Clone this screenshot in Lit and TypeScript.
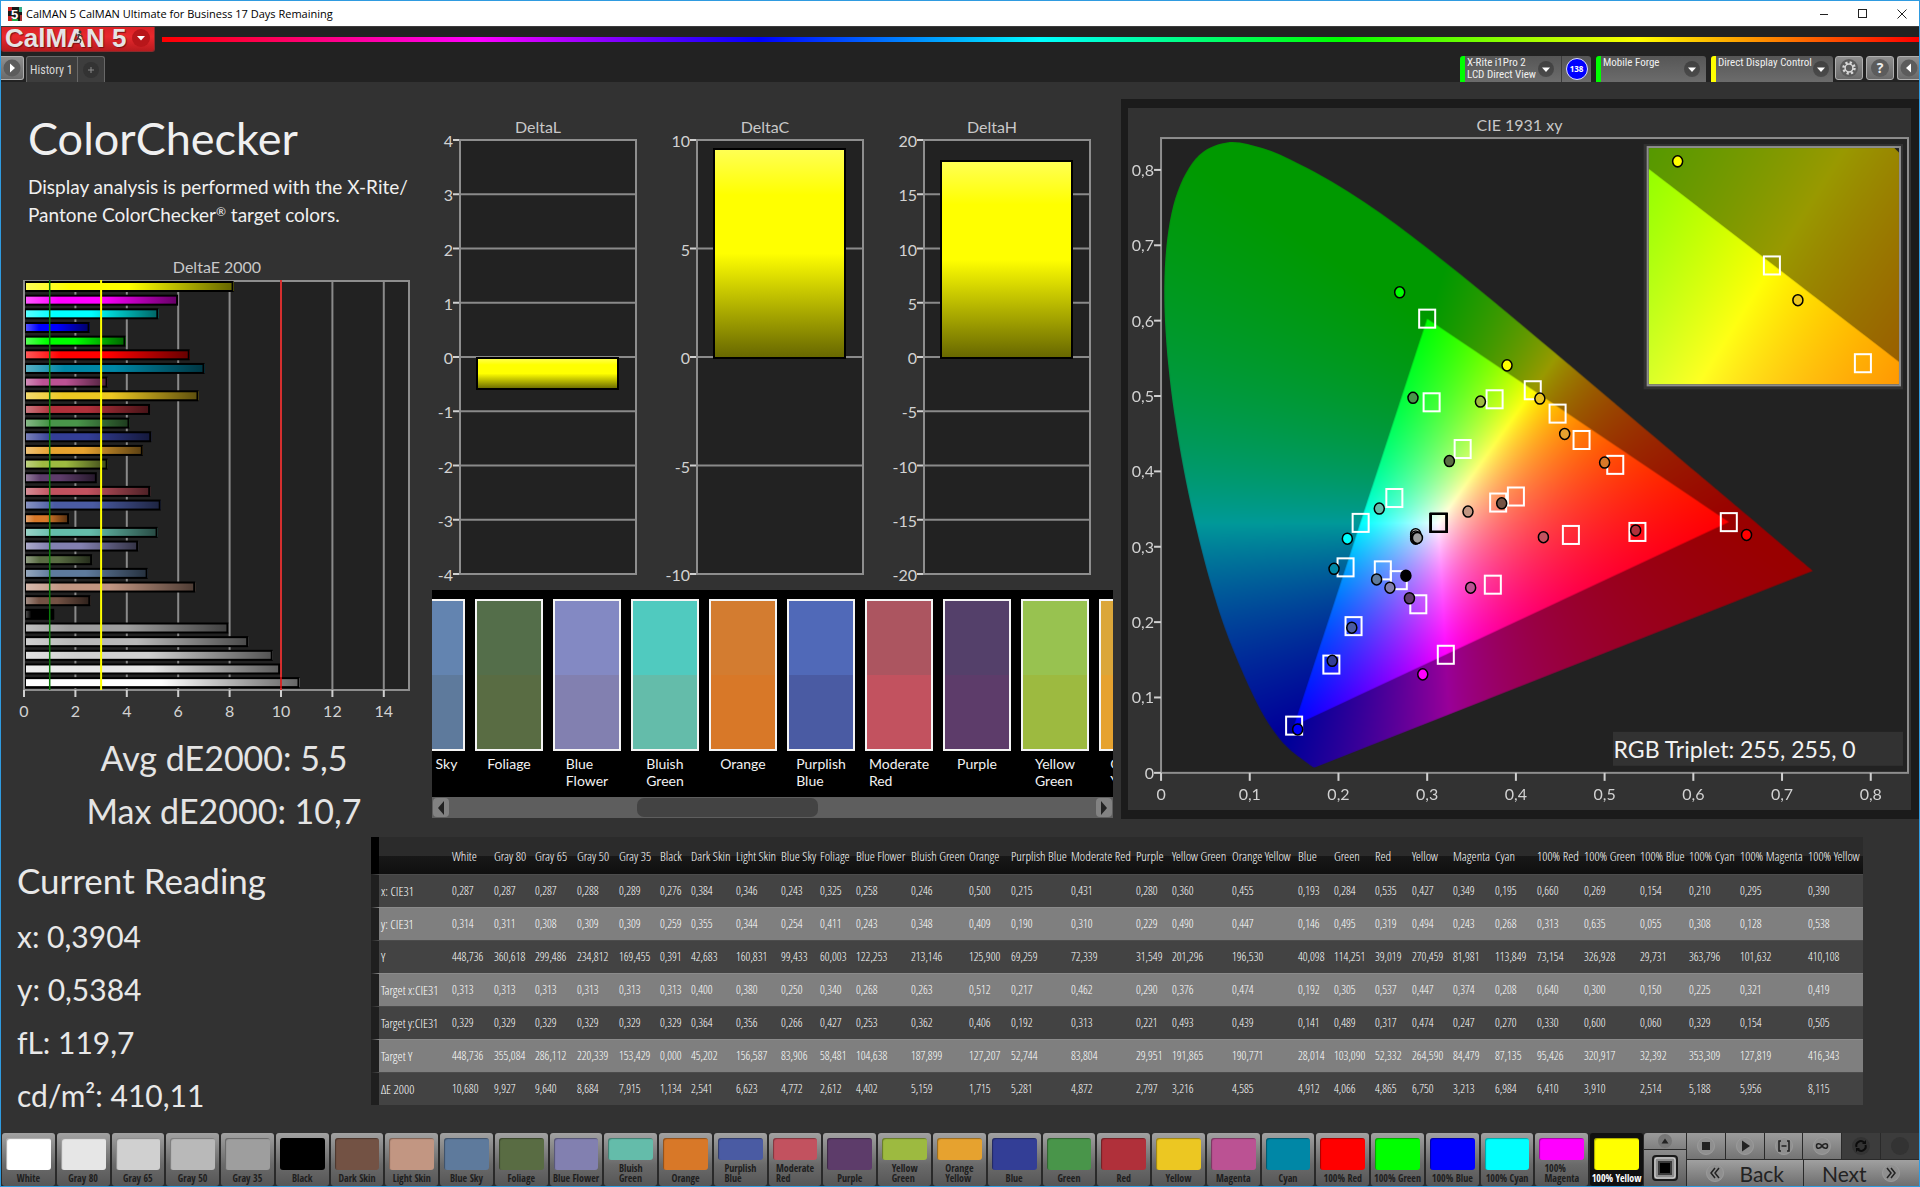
import { LitElement, html, svg, css } from "lit";
import { customElement, property } from "lit/decorators.js";
import { classMap } from "lit/directives/class-map.js";

interface Patch {
  name: string;
  lines?: string[];
  color: string;
  width: number;
  values: string[];
}

const p = (name: string, color: string, width: number, values: string, lines?: string[]): Patch => ({
  name,
  color,
  width,
  values: values.split(" "),
  lines,
});

const PATCHES: Patch[] = [
  p("White", "#ffffff", 42, "0,287 0,314 448,736 0,313 0,329 448,736 10,680"),
  p("Gray 80", "#e6e6e6", 41, "0,287 0,311 360,618 0,313 0,329 355,084 9,927"),
  p("Gray 65", "#d0d0d0", 42, "0,287 0,308 299,486 0,313 0,329 286,112 9,640"),
  p("Gray 50", "#b9b9b9", 42, "0,288 0,309 234,812 0,313 0,329 220,339 8,684"),
  p("Gray 35", "#9e9e9e", 41, "0,289 0,309 169,455 0,313 0,329 153,429 7,915"),
  p("Black", "#000000", 31, "0,276 0,259 0,391 0,313 0,329 0,000 1,134"),
  p("Dark Skin", "#735244", 45, "0,384 0,355 42,683 0,400 0,364 45,202 2,541"),
  p("Light Skin", "#c29682", 45, "0,346 0,344 160,831 0,380 0,356 156,587 6,623"),
  p("Blue Sky", "#5e7a9c", 39, "0,243 0,254 99,433 0,250 0,266 83,906 4,772"),
  p("Foliage", "#596c43", 36, "0,325 0,411 60,003 0,340 0,427 58,481 2,612"),
  p("Blue Flower", "#8280b0", 55, "0,258 0,243 122,253 0,268 0,253 104,638 4,402", ["Blue", "Flower"]),
  p("Bluish Green", "#64bcaa", 58, "0,246 0,348 213,146 0,263 0,362 187,899 5,159", ["Bluish", "Green"]),
  p("Orange", "#d87828", 42, "0,500 0,409 125,900 0,512 0,406 127,207 1,715"),
  p("Purplish Blue", "#4a5ba3", 60, "0,215 0,190 69,259 0,217 0,192 52,744 5,281", ["Purplish", "Blue"]),
  p("Moderate Red", "#c2525f", 65, "0,431 0,310 72,339 0,462 0,313 83,804 4,872", ["Moderate", "Red"]),
  p("Purple", "#5d3c6a", 36, "0,280 0,229 31,549 0,290 0,221 29,951 2,797"),
  p("Yellow Green", "#9dba40", 60, "0,360 0,490 201,296 0,376 0,493 191,865 3,216", ["Yellow", "Green"]),
  p("Orange Yellow", "#e6a22f", 66, "0,455 0,447 196,530 0,474 0,439 190,771 4,585", ["Orange", "Yellow"]),
  p("Blue", "#333e96", 36, "0,193 0,146 40,098 0,192 0,141 28,014 4,912"),
  p("Green", "#49954a", 41, "0,284 0,495 114,251 0,305 0,489 103,090 4,066"),
  p("Red", "#b0303a", 37, "0,535 0,319 39,019 0,537 0,317 52,332 4,865"),
  p("Yellow", "#ecc722", 41, "0,427 0,494 270,459 0,447 0,474 264,590 6,750"),
  p("Magenta", "#bb5293", 42, "0,349 0,243 81,981 0,374 0,247 84,479 3,213"),
  p("Cyan", "#0087a6", 42, "0,195 0,268 113,849 0,208 0,270 87,135 6,984"),
  p("100% Red", "#ff0000", 47, "0,660 0,313 73,154 0,640 0,330 95,426 6,410"),
  p("100% Green", "#00ff00", 56, "0,269 0,635 326,928 0,300 0,600 320,917 3,910"),
  p("100% Blue", "#0000ff", 49, "0,154 0,055 29,731 0,150 0,060 32,392 2,514"),
  p("100% Cyan", "#00ffff", 51, "0,210 0,308 363,796 0,225 0,329 353,309 5,188"),
  p("100% Magenta", "#ff00ff", 68, "0,295 0,128 101,632 0,321 0,154 127,819 5,956", ["100%", "Magenta"]),
  p("100% Yellow", "#ffff00", 57, "0,390 0,538 410,108 0,419 0,505 416,343 8,115"),
];

const ROWS = ["x: CIE31", "y: CIE31", "Y", "Target x:CIE31", "Target y:CIE31", "Target Y", "ΔE 2000"];

const num = (text: string) => Number(text.replace(",", "."));
const label = (value: number) => String(value).replace(".", ",");

const LOCUS: [number, number][] = [
  [0.1741, 0.005], [0.1733, 0.0048], [0.1714, 0.0051], [0.1689, 0.0069], [0.1644, 0.0109], [0.1566, 0.0177],
  [0.151, 0.0227], [0.144, 0.0297], [0.1355, 0.0399], [0.1241, 0.0578], [0.1096, 0.0868], [0.0913, 0.1327],
  [0.0687, 0.2007], [0.0454, 0.295], [0.0235, 0.4127], [0.0082, 0.5384], [0.0039, 0.6548], [0.0139, 0.7502],
  [0.0389, 0.812], [0.0743, 0.8338], [0.1142, 0.8262], [0.1547, 0.8059], [0.1929, 0.7816], [0.2296, 0.7543],
  [0.2658, 0.7243], [0.3016, 0.6923], [0.3373, 0.6589], [0.3731, 0.6245], [0.4087, 0.5896], [0.4441, 0.5547],
  [0.4788, 0.5202], [0.5125, 0.4866], [0.5448, 0.4544], [0.5752, 0.4242], [0.6029, 0.3965], [0.627, 0.3725],
  [0.6658, 0.334], [0.6915, 0.3083], [0.719, 0.2809], [0.7347, 0.2653],
];

interface View {
  width: number;
  height: number;
  originX: number;
  originY: number;
  scaleX: number;
  scaleY: number;
}

/** Paints the chromaticity diagram, dimmed outside the Rec. 709 triangle. */
function paintDiagram(canvas: HTMLCanvasElement, v: View) {
  canvas.width = v.width;
  canvas.height = v.height;
  const ctx = canvas.getContext("2d")!;
  const image = ctx.createImageData(v.width, v.height);
  const X = (x: number) => v.originX + x * v.scaleX;
  const Y = (y: number) => v.originY - y * v.scaleY;
  for (let j = 0; j < v.height; j++) {
    const y = (v.originY - j - 0.5) / v.scaleY;
    for (let i = 0; i < v.width; i++) {
      const x = (i + 0.5 - v.originX) / v.scaleX;
      const z = 1 - x - y;
      const r = Math.max(0, 3.2406 * x - 1.5372 * y - 0.4986 * z);
      const g = Math.max(0, -0.9689 * x + 1.8758 * y + 0.0415 * z);
      const b = Math.max(0, 0.0557 * x - 0.204 * y + 1.057 * z);
      const k = 255 / Math.max(r, g, b, 0.0001);
      const o = (j * v.width + i) * 4;
      image.data[o] = r * k;
      image.data[o + 1] = g * k;
      image.data[o + 2] = b * k;
      image.data[o + 3] = 255;
    }
  }
  ctx.putImageData(image, 0, 0);

  ctx.beginPath();
  ctx.rect(0, 0, v.width, v.height);
  ctx.moveTo(X(0.64), Y(0.33));
  ctx.lineTo(X(0.3), Y(0.6));
  ctx.lineTo(X(0.15), Y(0.06));
  ctx.closePath();
  ctx.fillStyle = "rgba(0,0,0,0.4)";
  ctx.fill("evenodd");

  ctx.globalCompositeOperation = "destination-in";
  ctx.beginPath();
  ctx.moveTo(X(LOCUS[0][0]), Y(LOCUS[0][1]));
  for (let i = 0; i < LOCUS.length - 1; i++) {
    const a = LOCUS[Math.max(0, i - 1)];
    const b = LOCUS[i];
    const c = LOCUS[i + 1];
    const d = LOCUS[Math.min(LOCUS.length - 1, i + 2)];
    ctx.bezierCurveTo(
      X(b[0] + (c[0] - a[0]) / 6), Y(b[1] + (c[1] - a[1]) / 6),
      X(c[0] - (d[0] - b[0]) / 6), Y(c[1] - (d[1] - b[1]) / 6),
      X(c[0]), Y(c[1]),
    );
  }
  ctx.closePath();
  ctx.fillStyle = "#000";
  ctx.fill();
}

const chartStyles = css`
  :host { display: block; }
  svg { display: block; width: 100%; height: auto; }
  text { font-family: "Lato", sans-serif; fill: #d2d2d2; }
  .axis { font-size: 16px; }
  .title { font-size: 16px; fill: #c8c8c8; }
  .plot { fill: #222222; }
  .frame { fill: none; stroke: #8e8e8e; stroke-width: 2; }
  .grid { stroke: #8a8a8a; stroke-width: 2; }
  .tick { stroke: #d0d0d0; stroke-width: 2; }
`;

@customElement("delta-e-chart")
export class DeltaEChart extends LitElement {
  static styles = [chartStyles, css`
    .bar { stroke: #000000; stroke-width: 2; }
  `];

  render() {
    const left = 23;
    const top = 31;
    const bottom = 440;
    const unit = 25.7;
    const bars = [...PATCHES].reverse();
    return html`<svg viewBox="0 0 430 480" role="img" aria-label="DeltaE 2000 per patch">
      <defs>
        <linearGradient id="shade">
          <stop offset="0" stop-color="#fff" stop-opacity="0.35"></stop>
          <stop offset="0.22" stop-color="#fff" stop-opacity="0"></stop>
          <stop offset="0.5" stop-color="#000" stop-opacity="0"></stop>
          <stop offset="1" stop-color="#000" stop-opacity="0.6"></stop>
        </linearGradient>
      </defs>
      <text class="title" x="216" y="23" text-anchor="middle">DeltaE 2000</text>
      <rect class="plot" x=${left} y=${top} width="385" height=${bottom - top}></rect>
      ${[2, 4, 6, 8, 10, 12, 14].map((v) => svg`
        <line class="grid" x1=${left + v * unit} x2=${left + v * unit} y1=${top} y2=${bottom}></line>`)}
      <rect class="frame" x=${left} y=${top} width="385" height=${bottom - top}></rect>
      ${bars.map((b, i) => {
        const w = num(b.values[6]) * unit;
        const y = 32 + i * 13.66;
        return svg`
          <rect x=${left + 1} y=${y} width=${w} height="9" fill=${b.color}></rect>
          <rect class="bar" x=${left + 1} y=${y} width=${w - 1} height="9" fill="url(#shade)"></rect>`;
      })}
      <line x1=${left} x2=${left} y1=${top} y2=${bottom} class="frame"></line>
      <line x1=${left + unit} x2=${left + unit} y1="30" y2=${bottom} stroke="#0a7a0a" stroke-width="1.5"></line>
      <line x1=${left + 3 * unit} x2=${left + 3 * unit} y1="30" y2=${bottom} stroke="#ffff00" stroke-width="2"></line>
      <line x1=${left + 10 * unit} x2=${left + 10 * unit} y1="30" y2=${bottom} stroke="#ee1111" stroke-width="1.5"></line>
      ${[0, 2, 4, 6, 8, 10, 12, 14].map((v) => svg`
        <line class="tick" x1=${left + v * unit} x2=${left + v * unit} y1=${bottom} y2=${bottom + 7}></line>
        <text class="axis" x=${left + v * unit} y="467" text-anchor="middle">${v}</text>`)}
    </svg>`;
  }
}

interface Delta {
  title: string;
  titleX: number;
  x: number;
  width: number;
  ticks: number[];
  barTop: number;
  barHeight: number;
}

@customElement("delta-lch-charts")
export class DeltaLchCharts extends LitElement {
  static styles = [chartStyles, css`
    .bar { stroke: #000000; stroke-width: 2; }
  `];

  private charts: Delta[] = [
    { title: "DeltaL", titleX: 107, x: 29, width: 176, ticks: [4, 3, 2, 1, 0, -1, -2, -3, -4], barTop: 248, barHeight: 31 },
    { title: "DeltaC", titleX: 334, x: 266, width: 166, ticks: [10, 5, 0, -5, -10], barTop: 39, barHeight: 209 },
    { title: "DeltaH", titleX: 561, x: 493, width: 166, ticks: [20, 15, 10, 5, 0, -5, -10, -15, -20], barTop: 51, barHeight: 197 },
  ];

  render() {
    const top = 30;
    const height = 434;
    return html`<svg viewBox="0 0 690 480" role="img" aria-label="DeltaL, DeltaC and DeltaH">
      <defs>
        <linearGradient id="shade" x2="0" y2="1">
          <stop offset="0" stop-color="#ffff55"></stop>
          <stop offset="0.22" stop-color="#ffff00"></stop>
          <stop offset="0.5" stop-color="#ffff00"></stop>
          <stop offset="1" stop-color="#666600"></stop>
        </linearGradient>
      </defs>
      ${this.charts.map((c) => svg`
        <text class="title" x=${c.titleX} y="23" text-anchor="middle">${c.title}</text>
        <rect class="plot" x=${c.x} y=${top} width=${c.width} height=${height}></rect>
        ${c.ticks.map((t, i) => {
          const y = top + (i * height) / (c.ticks.length - 1);
          return svg`
            <line class="grid" x1=${c.x} x2=${c.x + c.width} y1=${y} y2=${y}></line>
            <line class="tick" x1=${c.x - 7} x2=${c.x} y1=${y} y2=${y}></line>
            <text class="axis" x=${c.x - 7} y=${y + 7} text-anchor="end">${t}</text>`;
        })}
        <rect class="frame" x=${c.x} y=${top} width=${c.width} height=${height}></rect>
        <rect class="bar" x=${c.x + 17} y=${c.barTop} width=${c.width - 35} height=${c.barHeight} fill="url(#shade)"></rect>`)}
    </svg>`;
  }
}

@customElement("cie-chart")
export class CieChart extends LitElement {
  static styles = [chartStyles, css`
    canvas { display: block; width: 100%; height: 100%; }
    .target { fill: none; stroke: #ffffff; stroke-width: 2; }
    .white-point { stroke: #000000; }
    .reading { stroke: #000000; stroke-width: 1.5; }
    .plate { fill: #323232; }
    .triplet { font-size: 23px; fill: #f2f2f2; }
    .loupe { fill: none; stroke: #8e8e8e; stroke-width: 2; }
  `];

  private main: View = { width: 744, height: 632, originX: -1, originY: 631, scaleX: 886, scaleY: 752.7 };
  private zoom: View = { width: 250, height: 236, originX: -1237, originY: 1708, scaleX: 3246, scaleY: 3150 };

  firstUpdated() {
    const [main, zoom] = Array.from(this.renderRoot.querySelectorAll("canvas"));
    paintDiagram(main, this.main);
    paintDiagram(zoom, this.zoom);
  }

  private target(v: View, dx: number, dy: number, patch: Patch, neutral: boolean) {
    const x = dx + v.originX + num(patch.values[3]) * v.scaleX;
    const y = dy + v.originY - num(patch.values[4]) * v.scaleY;
    return svg`<rect class=${neutral ? "target white-point" : "target"} x=${x - 8} y=${y - 9} width="16" height="18"></rect>`;
  }

  private reading(v: View, dx: number, dy: number, patch: Patch) {
    const x = dx + v.originX + num(patch.values[0]) * v.scaleX;
    const y = dy + v.originY - num(patch.values[1]) * v.scaleY;
    return svg`<ellipse class="reading" cx=${x} cy=${y} rx="5" ry="5.5" fill=${patch.color}></ellipse>`;
  }

  render() {
    const ticks = [0, 0.1, 0.2, 0.3, 0.4, 0.5, 0.6, 0.7, 0.8];
    const near = PATCHES.filter((q) => ["100% Yellow", "Yellow"].includes(q.name));
    return html`<svg viewBox="0 0 782 701" role="img" aria-label="CIE 1931 xy chromaticity diagram">
      <text class="title" x="391" y="23" text-anchor="middle">CIE 1931 xy</text>
      <rect class="plot" x="33" y="30" width="746" height="634"></rect>
      <foreignObject x="34" y="31" width="744" height="632"><canvas></canvas></foreignObject>
      ${PATCHES.map((q, i) => this.target(this.main, 34, 31, q, i < 6))}
      ${PATCHES.map((q) => this.reading(this.main, 34, 31, q))}
      <rect class="frame" x="33" y="30" width="746" height="634"></rect>
      ${ticks.map((t) => svg`
        <line class="tick" x1=${33 + t * 886} x2=${33 + t * 886} y1="664" y2="672"></line>
        <text class="axis" x=${33 + t * 886} y="691" text-anchor="middle">${label(t)}</text>
        <line class="tick" x1="26" x2="33" y1=${664 - t * 752.7} y2=${664 - t * 752.7}></line>
        <text class="axis" x="26" y=${670 - t * 752.7} text-anchor="end">${label(t)}</text>`)}
      <rect class="plate" x="515" y="36" width="259" height="245"></rect>
      <rect class="plot" x="519" y="39" width="252" height="238"></rect>
      <foreignObject x="520" y="40" width="250" height="236"><canvas></canvas></foreignObject>
      <rect class="loupe" x="519" y="39" width="252" height="238"></rect>
      ${near.map((q) => this.target(this.zoom, 520, 40, q, false))}
      ${near.map((q) => this.reading(this.zoom, 520, 40, q))}
      <rect class="plate" x="484" y="623" width="290" height="34"></rect>
      <text class="triplet" x="485" y="649">RGB Triplet: 255, 255, 0</text>
    </svg>`;
  }
}

interface StripItem { lines: string[]; actual: string; target: string; }

@customElement("swatch-strip")
export class SwatchStrip extends LitElement {
  static styles = css`
    :host { display: block; }
    .view { overflow: hidden; background: #000000; padding: 9px 0 8px; }
    .track { display: flex; gap: 10px; margin: 0 0 0 -35px; padding: 0; list-style: none; }
    .item { flex: 0 0 68px; display: flex; flex-direction: column; align-items: center; }
    .chip { align-self: stretch; height: 148px; border: 2px solid #f4f4f4; display: flex; flex-direction: column; }
    .half { flex: 1; }
    .name { margin-top: 4px; height: 34px; font: 14px/17px "Lato", sans-serif; color: #f2f2f2; white-space: pre; }
    .scroll { display: flex; height: 21px; box-sizing: border-box; padding: 1px; background: #5e5e5e; }
    .arrow { flex: 0 0 16px; padding: 0; border: 0; border-radius: 4px; background: #828282; display: grid; place-items: center; }
    .rail { flex: 1; display: flex; }
    .thumb { width: 28%; margin-left: 29%; border-radius: 7px; background: #434343; }
  `;

  private items: StripItem[] = [
    { lines: ["Blue Sky"], actual: "#6384b0", target: "#5e7a9c" },
    { lines: ["Foliage"], actual: "#546e4a", target: "#596c43" },
    { lines: ["Blue", "Flower"], actual: "#8389c3", target: "#8280b0" },
    { lines: ["Bluish", "Green"], actual: "#50cabf", target: "#64bcaa" },
    { lines: ["Orange"], actual: "#d37c30", target: "#d87828" },
    { lines: ["Purplish", "Blue"], actual: "#5069b8", target: "#4a5ba3" },
    { lines: ["Moderate", "Red"], actual: "#ac5560", target: "#c2525f" },
    { lines: ["Purple"], actual: "#54406a", target: "#5d3c6a" },
    { lines: ["Yellow", "Green"], actual: "#98c250", target: "#9dba40" },
    { lines: ["Orange", "Yellow"], actual: "#dba63a", target: "#e6a22f" },
  ];

  render() {
    return html`
      <div class="view"><ul class="track">
        ${this.items.map((s) => html`<li class="item">
          <div class="chip">
            <div class="half" style="background:${s.actual}"></div>
            <div class="half" style="background:${s.target}"></div>
          </div>
          <div class="name">${s.lines.join("\n")}</div>
        </li>`)}
      </ul></div>
      <div class="scroll">
        <button class="arrow" aria-label="Scroll left"><svg width="8" height="14"><path d="M7 0v14L1 7z" fill="#222"></path></svg></button>
        <div class="rail"><div class="thumb"></div></div>
        <button class="arrow" aria-label="Scroll right"><svg width="8" height="14"><path d="M1 0v14l6-7z" fill="#222"></path></svg></button>
      </div>`;
  }
}

@customElement("reading-table")
export class ReadingTable extends LitElement {
  static styles = css`
    :host { display: block; }
    table { width: 100%; table-layout: fixed; border-collapse: separate; border-spacing: 0; font: 12px/16px "Open Sans Condensed Light", "Roboto Condensed", sans-serif; color: #ffffff; }
    th, td { height: 33px; padding: 0 0 0 2px; box-sizing: border-box; text-align: left; font-weight: 400; white-space: nowrap; }
    th { font-size: 13px; }
    thead th, thead td { height: 37px; background: linear-gradient(#2b2b2b 0 50%, #181818 50%, #0f0f0f); }
    tbody tr { background: #434343; }
    tbody tr:nth-child(even) { background: #7f7f7f; }
    tbody th, tbody td { border-top: 1px solid #4c4c4c; }
    tbody tr:nth-child(even) > * { border-top-color: #8b8b8b; }
    .lead { border-left: 8px solid #1f1f1f; }
    thead .lead { border-left-color: #000000; }
  `;

  render() {
    return html`<table>
      <colgroup>
        <col style="width:79px">
        ${PATCHES.map((q) => html`<col style="width:${q.width}px">`)}
      </colgroup>
      <thead><tr>
        <td class="lead"></td>
        ${PATCHES.map((q) => html`<th scope="col">${q.name}</th>`)}
      </tr></thead>
      <tbody>
        ${ROWS.map((name, i) => html`<tr>
          <th class="lead" scope="row">${name}</th>
          ${PATCHES.map((q) => html`<td>${q.values[i]}</td>`)}
        </tr>`)}
      </tbody>
    </table>`;
  }
}

@customElement("patch-bar")
export class PatchBar extends LitElement {
  @property() selected = "100% Yellow";

  static styles = css`
    :host { display: flex; height: 53px; background: #2a2a2a; }
    button { margin: 0; padding: 0; border: 0; font: 700 10px/10px "Open Sans Condensed", sans-serif; color: #1e1e1e; }
    svg { display: block; }
    .patches { flex: 1; display: flex; min-width: 0; }
    .patch { flex: 1 1 0; min-width: 0; margin: 0 1px; display: flex; flex-direction: column; align-items: center; justify-content: space-between; padding: 5px 0 2px; background: linear-gradient(#a2a2a2, #8a8a8a 25%, #6a6a6a 60%, #565656); border-radius: 3px; overflow: hidden; }
    .patch.on { background: #101010; color: #ffffff; }
    .chip { align-self: stretch; flex: 1; margin: 0 4px 3px; border-radius: 3px; box-shadow: inset 1px 1px 1px rgba(0, 0, 0, 0.35); }
    .name { white-space: pre; text-align: left; padding-bottom: 1px; }
    .stack { flex: 0 0 42px; display: flex; flex-direction: column; gap: 1px; }
    .up { height: 16px; display: grid; place-items: center; background: linear-gradient(#9a9a9a, #808080); border-radius: 3px 0 0 0; }
    .window { flex: 1; display: grid; place-items: center; background: linear-gradient(#8c8c8c, #5e5e5e); }
    .controls { flex: 0 0 232px; display: flex; flex-direction: column; gap: 1px; margin-left: 1px; }
    .row { display: flex; gap: 1px; flex: 1; }
    .tool { flex: 1; display: grid; place-items: center; background: linear-gradient(#9c9c9c, #747474); }
    .tool.off { background: #3c3c3c; }
    .nav { flex: 1; display: flex; align-items: center; justify-content: center; gap: 14px; background: linear-gradient(#a0a0a0, #6e6e6e); font: 21px/25px "Lato", sans-serif; color: #222222; }
  `;

  render() {
    const disc = svg`<circle cx="10" cy="10" r="9" fill="#8f8f8f"></circle><circle cx="10" cy="10" r="8.5" fill="none" stroke="#a6a6a6" stroke-opacity=".5"></circle>`;
    const dim = svg`<circle cx="10" cy="10" r="9" fill="#333"></circle>`;
    const tools = [
      { name: "Stop", off: false, icon: svg`${disc}<path d="M6 6h8v8H6z" fill="#222"></path>` },
      { name: "Play", off: false, icon: svg`${disc}<path d="M7 4.500v11l8-5.500z" fill="#222"></path>` },
      { name: "Read series", off: false, icon: svg`${disc}<path d="M7 5H5v10h2M13 5h2v10h-2M7.500 10h5" fill="none" stroke="#222" stroke-width="1.600"></path>` },
      { name: "Read continuously", off: false, icon: svg`${disc}<path d="M10 10C8.500 7.500 4.500 6.500 4.500 10S8.500 12.500 10 10s5.500-3.500 5.500 0-4 2.500-5.500 0z" fill="none" stroke="#222" stroke-width="1.600"></path>` },
      { name: "Refresh", off: true, icon: svg`${dim}<path d="M5.500 11a4.500 4.500 0 0 1 7.500-4.500M14.500 9a4.500 4.500 0 0 1-7.500 4.500" fill="none" stroke="#0c0c0c" stroke-width="2"></path><path d="M11 8h4V4zM9 12H5v4z" fill="#0c0c0c"></path>` },
      { name: "Record", off: true, icon: dim },
    ];
    return html`
      <div class="patches">
        ${PATCHES.map((q) => html`<button class=${classMap({ patch: true, on: q.name === this.selected })}>
          <span class="chip" style="background:${q.color}"></span>
          <span class="name">${(q.name === "Blue Flower" ? [q.name] : q.lines ?? [q.name]).join("\n")}</span>
        </button>`)}
      </div>
      <div class="stack">
        <button class="up" aria-label="Expand"><svg width="14" height="14"><circle cx="7" cy="7" r="7" fill="#777"></circle><path d="M3.500 9.500h7L7 4.500z" fill="#222"></path></svg></button>
        <button class="window" aria-label="Pattern window"><svg width="28" height="28"><rect x="2" y="2" width="24" height="24" rx="3" fill="#8c8c8c" stroke="#1a1a1a" stroke-width="2"></rect><rect x="4" y="4" width="20" height="20" rx="2" fill="none" stroke="#ddd" stroke-width="1"></rect><rect x="8" y="8" width="12" height="12" fill="#000" stroke="#3a3a3a" stroke-width="2"></rect></svg></button>
      </div>
      <div class="controls">
        <div class="row">
          ${tools.map((t) => html`<button class=${classMap({ tool: true, off: t.off })} aria-label=${t.name}><svg width="20" height="20">${t.icon}</svg></button>`)}
        </div>
        <div class="row">
          <button class="nav"><svg width="20" height="20">${disc}<path d="M10 5l-4 5 4 5M14 5l-4 5 4 5" fill="none" stroke="#222" stroke-width="1.500"></path></svg>Back</button>
          <button class="nav">Next<svg width="20" height="20">${disc}<path d="M6 5l4 5-4 5M10 5l4 5-4 5" fill="none" stroke="#222" stroke-width="1.500"></path></svg></button>
        </div>
      </div>`;
  }
}

const arrowIcon = html`<svg width="18" height="18"><circle cx="9" cy="9" r="8" fill="#000" fill-opacity=".28"></circle><path d="M5 7.500h8l-4 4.500z" fill="#fff"></path></svg>`;

@customElement("app-root")
export class AppRoot extends LitElement {
  static styles = css`
    :host { display: block; font-family: "Lato", "Open Sans", sans-serif; }
    svg { display: block; }
    button { margin: 0; padding: 0; border: 0; background: none; color: inherit; font: inherit; text-align: left; }
    .window { box-sizing: border-box; min-height: 100vh; display: flex; flex-direction: column; border: 1px solid #2f9be0; background: #323232; color: #f0f0f0; }

    .titlebar { display: flex; align-items: center; height: 25px; padding-left: 7px; gap: 4px; background: #ffffff; color: #000000; font: 12px/16px "Open Sans", sans-serif; }
    .caption { flex: 1; font-size: 11px; }
    .winbtn { width: 35px; height: 25px; display: grid; place-items: center; }

    .header { background: #222222; border-top: 1px solid #3c3c3c; }
    .brandrow { display: flex; align-items: center; }
    .brand { position: relative; display: flex; align-items: center; gap: 6px; width: 154px; height: 25px; box-sizing: border-box; padding: 0 0 3px 3px; background: linear-gradient(#dc2226, #e8292d 40%, #b81a1e); border: 1px solid #8a2a2c; border-top: 0; border-radius: 0 0 3px 3px; overflow: hidden; color: #e4e4e4; font: 700 26px/22px "Liberation Sans", sans-serif; text-shadow: 1px 1px 1px #7a1012; white-space: nowrap; }
    .runner { position: absolute; left: 71px; top: 3px; }
    .rainbow { flex: 1; height: 5px; margin-left: 7px; background: linear-gradient(90deg, #ff0000, #ff00ff 18%, #0000ff 34%, #00ffff 50%, #00ff00 67%, #ffff00 84%, #ff0000); }
    .tabrow { display: flex; align-items: flex-start; height: 30px; padding-top: 4px; box-sizing: border-box; font: 12px/12px "Roboto Condensed", "Lato", sans-serif; }
    .square { width: 28px; height: 24px; box-sizing: border-box; border: 1px solid #b0b0b0; border-radius: 3px; background: linear-gradient(#8e8e8e, #6a6a6a); display: grid; place-items: center; }
    .run { width: 23px; border-left: 0; border-radius: 0 3px 3px 0; }
    .back { width: 22px; border-right: 0; border-radius: 3px 0 0 3px; }
    .tabs { display: flex; margin-left: 2px; height: 26px; box-sizing: border-box; border: 1px solid #686868; border-bottom: 0; border-radius: 3px 3px 0 0; background: #3d3d3d; }
    .tab { padding: 0 4px 0 3px; color: #d8d8d8; border-right: 1px solid #686868; }
    .add { width: 26px; display: grid; place-items: center; }
    .spacer { flex: 1; }
    .device { display: flex; height: 26px; box-sizing: border-box; border-left: 5px solid #00ff00; border-radius: 3px 3px 0 0; background: linear-gradient(#565656, #6c6c6c); margin-right: 5px; padding-left: 2px; justify-content: space-between; }
    .device.yellow { border-left-color: #ffff00; margin-right: 2px; }
    .device.meter { width: 131px; }
    .device.source { width: 110px; }
    .device.display { width: 122px; }
    .dev-text { padding-top: 1px; font-size: 11px; line-height: 12px; white-space: pre; }
    .dev-arrow { align-self: center; margin-right: 5px; }
    .badge { display: grid; place-items: center; width: 29px; border-left: 1px solid #3c3c3c; }
    .count { width: 20px; height: 20px; border: 1px solid #e0e0ff; border-radius: 50%; background: #0000ff; color: #ffffff; font: 700 8px/20px "Open Sans", sans-serif; text-align: center; }
    .group { display: flex; gap: 3px; }

    .upper { display: grid; grid-template-columns: minmax(0, 430fr) minmax(0, 690fr) minmax(0, 798fr); align-items: start; }
    .intro { height: 168px; box-sizing: border-box; padding: 26px 0 0 27px; }
    h1 { margin: 0; font-weight: 400; font-size: 45px; line-height: 60px; }
    .intro p { margin: 5px 0 0; font-size: 19px; line-height: 28px; white-space: nowrap; }
    .intro sup { font-size: 12px; line-height: 12px; vertical-align: 6px; }
    .stats { margin: 0; padding-top: 1px; text-align: center; }
    .stats p { margin: 0; font-size: 34px; line-height: 53px; color: #e4e4e4; padding-left: 16px; }
    .middle { padding-top: 28px; }
    .strip { padding: 0 8px 0 1px; }
    .cie { margin-top: 17px; background: #1b1b1b; padding: 9px 8px 9px 7px; }
    .cie-inner { background: #323232; }

    .lower { flex: 1; display: flex; }
    .reading { flex: 0 0 354px; padding: 17px 0 0 16px; box-sizing: content-box; }
    .reading p, .reading h2 { margin: 0; font-size: 30px; line-height: 53px; font-weight: 400; color: #e8e8e8; }
    .reading h2 { font-size: 35px; margin-bottom: 3px; }
    .tablebox { flex: 1; min-width: 0; margin-right: 57px; }
  `;

  render() {
    return html`<div class="window">
      <div class="titlebar">
        <svg width="14" height="14"><rect width="14" height="14" fill="#181818"></rect><path d="M0 0h4v4H0zM0 9h4v5H0z" fill="#c22"></path><path d="M4 12h6v2H4z" fill="#2a4"></path><path d="M11 0h3v5h-3z" fill="#3a8"></path><path d="M12 8h2v6h-2z" fill="#a33"></path><text x="3" y="12" font-family="Liberation Sans" font-weight="700" font-size="13" fill="#fff">5</text></svg>
        <span class="caption">CalMAN 5 CalMAN Ultimate for Business 17 Days Remaining</span>
        <button class="winbtn" aria-label="Minimize"><svg width="10" height="10"><path d="M1 5.500h8" stroke="#222"></path></svg></button>
        <button class="winbtn" aria-label="Maximize"><svg width="10" height="10"><rect x=".5" y=".5" width="8" height="8" fill="none" stroke="#222"></rect></svg></button>
        <button class="winbtn" aria-label="Close"><svg width="10" height="10"><path d="M.5.5l9 9M9.500.5l-9 9" stroke="#222"></path></svg></button>
      </div>
      <div class="header">
        <div class="brandrow">
          <button class="brand">CalMAN 5<svg class="runner" width="11" height="13"><circle cx="7" cy="2" r="1.500" fill="#3a3a3a"></circle><path d="M6.500 4L5 8l3 2-1 3M5 8l-1.500 2.500H1M6 4.500L3 5.500M6.500 5l3 1.500" fill="none" stroke="#3a3a3a" stroke-width="1.300"></path></svg><svg width="18" height="18"><circle cx="9" cy="9" r="9" fill="#b8161a"></circle><path d="M5 7h8l-4 4.500z" fill="#fff"></path></svg></button>
          <div class="rainbow"></div>
        </div>
        <div class="tabrow">
          <button class="square run" aria-label="Show workflow"><svg width="18" height="18"><circle cx="9" cy="9" r="8.500" fill="#5c5c5c"></circle><path d="M7 4.500v9L12 9z" fill="#fff"></path></svg></button>
          <div class="tabs">
            <button class="tab">History 1</button>
            <button class="add" aria-label="Add tab"><svg width="18" height="18"><circle cx="9" cy="9" r="8" fill="#333"></circle><path d="M6 9h6M9 6v6" stroke="#8c8c8c"></path></svg></button>
          </div>
          <div class="spacer"></div>
          <div class="device meter"><span class="dev-text">${"X-Rite i1Pro 2\nLCD Direct View"}</span><button class="dev-arrow" aria-label="Meter menu">${arrowIcon}</button><div class="badge"><div class="count">138</div></div></div>
          <div class="device source"><span class="dev-text">Mobile Forge</span><button class="dev-arrow" aria-label="Source menu">${arrowIcon}</button></div>
          <div class="device yellow display"><span class="dev-text">Direct Display Control</span><button class="dev-arrow" aria-label="Display menu">${arrowIcon}</button></div>
          <div class="group">
            <button class="square" aria-label="Settings"><svg width="20" height="20"><circle cx="10" cy="10" r="9" fill="#5c5c5c"></circle><circle cx="10" cy="10" r="5.500" fill="none" stroke="#d8d8d8" stroke-width="2.500" stroke-dasharray="2.200 2.120"></circle><circle cx="10" cy="10" r="3.900" fill="none" stroke="#d8d8d8" stroke-width="1.500"></circle></svg></button>
            <button class="square" aria-label="Help"><svg width="20" height="20"><circle cx="10" cy="10" r="9" fill="#5c5c5c"></circle><text x="10" y="15" text-anchor="middle" font-family="Open Sans" font-weight="700" font-size="14" fill="#eee">?</text></svg></button>
            <button class="square back" aria-label="Hide panel"><svg width="18" height="18"><circle cx="9" cy="9" r="8.500" fill="#5c5c5c"></circle><path d="M11 4.500v9L6 9z" fill="#fff"></path></svg></button>
          </div>
        </div>
      </div>

      <div class="upper">
        <section>
          <div class="intro">
            <h1>ColorChecker</h1>
            <p>Display analysis is performed with the X-Rite/<br>Pantone ColorChecker<sup>®</sup> target colors.</p>
          </div>
          <delta-e-chart></delta-e-chart>
          <div class="stats"><p>Avg dE2000: 5,5</p><p>Max dE2000: 10,7</p></div>
        </section>
        <section class="middle">
          <delta-lch-charts></delta-lch-charts>
          <div class="strip"><swatch-strip></swatch-strip></div>
        </section>
        <section class="cie"><div class="cie-inner"><cie-chart></cie-chart></div></section>
      </div>

      <div class="lower">
        <section class="reading">
          <h2>Current Reading</h2>
          <p>x: 0,3904</p>
          <p>y: 0,5384</p>
          <p>fL: 119,7</p>
          <p>cd/m²: 410,11</p>
        </section>
        <div class="tablebox"><reading-table></reading-table></div>
      </div>
      <patch-bar></patch-bar>
    </div>`;
  }
}
